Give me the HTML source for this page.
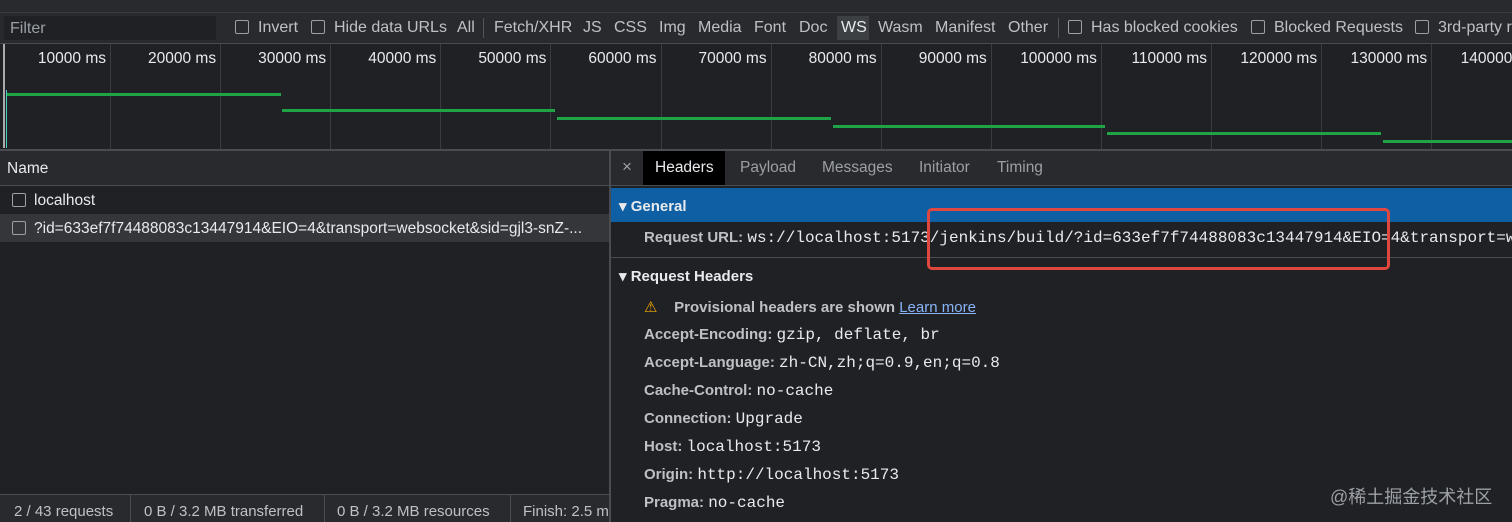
<!DOCTYPE html><html><head><style>
html,body{margin:0;width:1512px;height:522px;overflow:hidden}
body{background:#202124;font-family:"Liberation Sans",sans-serif;color:#e8eaed;font-size:15px}
#root{position:relative;width:1512px;height:522px;overflow:hidden}
.a{position:absolute;white-space:nowrap}
.cb{display:inline-block;width:12px;height:12px;border:1px solid #9aa0a6;border-radius:2px;vertical-align:-2px;margin-right:8px}
.mono{font-family:"Liberation Mono",monospace;font-size:16px}
.k{color:#bdc1c6;font-weight:bold}
.f{position:absolute;top:19px;color:#bdc1c6;font-size:16px;white-space:nowrap}
.fb{position:absolute;top:20px;width:12px;height:12px;border:1px solid #9aa0a6;border-radius:2px}
.h{font-size:15.5px}
</style></head><body><div id="root">
<div class="a" style="left:0;top:0;width:1512px;height:12px;background:#292a2d;border-bottom:1px solid #3c3c3c"></div>
<div class="a" style="left:0;top:13px;width:1512px;height:30px;background:#292a2d;border-bottom:1px solid #494c50"></div>
<div class="a" style="left:4px;top:16px;width:212px;height:24px;background:#202124"></div>
<div class="a" style="left:10px;top:20px;color:#9aa0a6;font-size:16px">Filter</div>
<div class="fb" style="left:235px"></div><div class="f" style="left:258px">Invert</div>
<div class="fb" style="left:311px"></div><div class="f" style="left:334px">Hide data URLs</div>
<div class="f" style="left:457px">All</div>
<div class="a" style="left:483px;top:18px;width:1px;height:20px;background:#555"></div>
<div class="f" style="left:494px">Fetch/XHR</div>
<div class="f" style="left:583px">JS</div>
<div class="f" style="left:614px">CSS</div>
<div class="f" style="left:659px">Img</div>
<div class="f" style="left:698px">Media</div>
<div class="f" style="left:754px">Font</div>
<div class="f" style="left:799px">Doc</div>
<div class="a" style="left:837px;top:16px;width:32px;height:24px;background:#3c4043"></div>
<div class="f" style="left:841px;color:#e8eaed">WS</div>
<div class="f" style="left:878px">Wasm</div>
<div class="f" style="left:935px">Manifest</div>
<div class="f" style="left:1008px">Other</div>
<div class="a" style="left:1058px;top:18px;width:1px;height:20px;background:#555"></div>
<div class="fb" style="left:1068px"></div><div class="f" style="left:1091px">Has blocked cookies</div>
<div class="fb" style="left:1251px"></div><div class="f" style="left:1274px">Blocked Requests</div>
<div class="fb" style="left:1415px"></div><div class="f" style="left:1438px">3rd-party r</div>
<div class="a" style="left:3px;top:44px;width:2px;height:104px;background:#aaa"></div>
<div class="a" style="left:6px;top:90px;width:1px;height:58px;background:#4ecdc4"></div>
<div id="tl"></div>
<div class="a" style="left:0;top:149px;width:1512px;height:2px;background:#494c50"></div>
<div class="a" style="left:0;top:151px;width:609px;height:34px;background:#292a2d;border-bottom:1px solid #494c50"></div>
<div class="a h" style="left:7px;top:160px">Name</div>
<div class="a" style="left:0;top:186px;width:609px;height:28px;background:#202124"></div>
<div class="a h" style="left:12px;top:192px"><span class="cb"></span>localhost</div>
<div class="a" style="left:0;top:214px;width:609px;height:28px;background:#35363a"></div>
<div class="a h" style="left:12px;top:220px"><span class="cb"></span>?id=633ef7f74488083c13447914&amp;EIO=4&amp;transport=websocket&amp;sid=gjl3-snZ-...</div>
<div class="a" style="left:609px;top:151px;width:2px;height:371px;background:#494c50"></div>
<div class="a" style="left:0;top:494px;width:609px;height:28px;background:#292a2d;border-top:1px solid #494c50;color:#bdc1c6"><span style="position:absolute;left:14px;top:8px">2 / 43 requests</span><span style="position:absolute;left:130px;top:0;height:28px;border-left:1px solid #494c50"></span><span style="position:absolute;left:144px;top:8px">0 B / 3.2 MB transferred</span><span style="position:absolute;left:324px;top:0;height:28px;border-left:1px solid #494c50"></span><span style="position:absolute;left:337px;top:8px">0 B / 3.2 MB resources</span><span style="position:absolute;left:510px;top:0;height:28px;border-left:1px solid #494c50"></span><span style="position:absolute;left:523px;top:8px">Finish: 2.5 m</span></div>
<div class="a" style="left:611px;top:151px;width:901px;height:34px;background:#292a2d;border-bottom:1px solid #494c50"></div>
<div class="a" style="left:622px;top:157px;color:#9aa0a6;font-size:17px">×</div>
<div class="a" style="left:643px;top:151px;width:82px;height:34px;background:#000"></div>
<div class="a h" style="left:655px;top:159px">Headers</div>
<div class="a h" style="left:740px;top:159px;color:#9aa0a6">Payload</div>
<div class="a h" style="left:822px;top:159px;color:#9aa0a6">Messages</div>
<div class="a h" style="left:919px;top:159px;color:#9aa0a6">Initiator</div>
<div class="a h" style="left:997px;top:159px;color:#9aa0a6">Timing</div>
<div class="a" style="left:611px;top:188px;width:901px;height:34px;background:#0e5fa3"></div>
<div class="a" style="left:619px;top:197px;font-weight:bold">▾ General</div>
<div class="a" style="left:644px;top:229px;width:868px;overflow:hidden"><span class="k">Request URL:</span> <span class="mono">ws://localhost:5173/jenkins/build/?id=633ef7f74488083c13447914&amp;EIO=4&amp;transport=websocket</span></div>
<div class="a" style="left:611px;top:257px;width:901px;height:1px;background:#494c50"></div>
<div class="a" style="left:619px;top:267px;font-weight:bold">▾ Request Headers</div>
<div class="a" style="left:644px;top:298px"><span style="color:#f9ab00">⚠</span>&nbsp;&nbsp;&nbsp; <b style="color:#bdc1c6">Provisional headers are shown</b> <span style="color:#8ab4f8;text-decoration:underline">Learn more</span></div>
<div class="a" style="left:644px;top:326px"><span class="k">Accept-Encoding:</span> <span class="mono">gzip, deflate, br</span></div>
<div class="a" style="left:644px;top:354px"><span class="k">Accept-Language:</span> <span class="mono">zh-CN,zh;q=0.9,en;q=0.8</span></div>
<div class="a" style="left:644px;top:382px"><span class="k">Cache-Control:</span> <span class="mono">no-cache</span></div>
<div class="a" style="left:644px;top:410px"><span class="k">Connection:</span> <span class="mono">Upgrade</span></div>
<div class="a" style="left:644px;top:438px"><span class="k">Host:</span> <span class="mono">localhost:5173</span></div>
<div class="a" style="left:644px;top:466px"><span class="k">Origin:</span> <span class="mono">http://localhost:5173</span></div>
<div class="a" style="left:644px;top:494px"><span class="k">Pragma:</span> <span class="mono">no-cache</span></div>
<div class="a" style="left:927px;top:208px;width:457px;height:56px;border:3px solid #e0483f;border-radius:5px"></div>
<div class="a" style="left:1330px;top:483px;color:#9aa0a6;font-family:'Liberation Sans','Noto Sans CJK SC',sans-serif;font-size:18px">@稀土掘金技术社区</div>
<script>
var h='',labels=[10000,20000,30000,40000,50000,60000,70000,80000,90000,100000,110000,120000,130000,140000];
for(var i=0;i<14;i++){var x=110+i*110.1;h+='<div class="a" style="left:'+x+'px;top:44px;width:1px;height:105px;background:#3c3c3c"></div><div class="a" style="left:'+(x-114)+'px;width:110px;text-align:right;top:50px;color:#e8eaed;font-size:15.5px">'+labels[i]+' ms</div>';}
var seg=[[7,281,93],[282,555,109],[557,831,117],[833,1105,125],[1107,1381,132],[1383,1512,140]];
seg.forEach(function(s){h+='<div class="a" style="left:'+s[0]+'px;top:'+s[2]+'px;width:'+(s[1]-s[0])+'px;height:3px;background:#1ea446"></div>'});
document.getElementById('tl').innerHTML=h;
</script>
</div></body></html>
